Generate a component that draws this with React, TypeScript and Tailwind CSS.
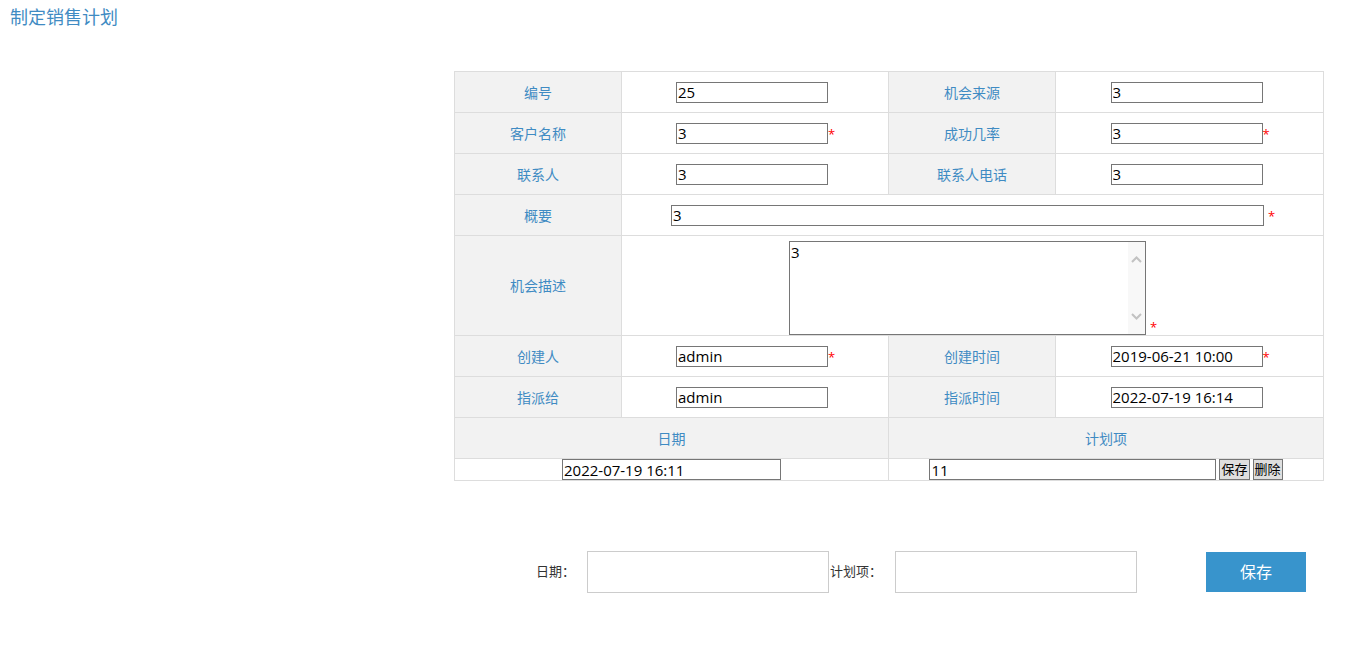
import React from 'react';

const labelCls = 'bg-[#f2f2f2] border border-[#dddddd] text-center text-[14px] text-[#3f8bc3] h-[41px]';
const valueCls = 'border border-[#dddddd] h-[41px]';
const inputCls =
  'h-[21px] border border-[#767676] bg-white px-[1px] text-[15px] leading-[19px] text-black outline-none';

const Star = ({ show }: { show?: boolean }) => (
  <span className="inline-block w-[6px] text-[13px] leading-none text-[#ff0000] self-start pt-[5px]">
    {show ? '*' : ''}
  </span>
);

const Field = ({ value, star }: { value: string; star?: boolean }) => (
  <div className="flex justify-center">
    <input className={`${inputCls} w-[152px]`} defaultValue={value} />
    <Star show={star} />
  </div>
);

const App = () => {
  return (
    <div className="min-h-[645px] bg-white" style={{ fontFamily: '"Open Sans", "Noto Sans CJK SC", sans-serif' }}>
      <div className="px-[10px] pt-[4px] text-[18px] leading-[27px] text-[#3f8bc3]">制定销售计划</div>

      <table className="ml-[454px] mt-[40px] w-[869px] border-collapse table-fixed">
        <colgroup>
          <col className="w-[167px]" />
          <col className="w-[267px]" />
          <col className="w-[167px]" />
          <col className="w-[268px]" />
        </colgroup>
        <tbody>
          <tr>
            <td className={labelCls}>编号</td>
            <td className={valueCls}><Field value="25" /></td>
            <td className={labelCls}>机会来源</td>
            <td className={valueCls}><Field value="3" /></td>
          </tr>
          <tr>
            <td className={labelCls}>客户名称</td>
            <td className={valueCls}><Field value="3" star /></td>
            <td className={labelCls}>成功几率</td>
            <td className={valueCls}><Field value="3" star /></td>
          </tr>
          <tr>
            <td className={labelCls}>联系人</td>
            <td className={valueCls}><Field value="3" /></td>
            <td className={labelCls}>联系人电话</td>
            <td className={valueCls}><Field value="3" /></td>
          </tr>
          <tr>
            <td className={labelCls}>概要</td>
            <td className={valueCls} colSpan={3}>
              <div className="flex justify-center gap-[4px]">
                <input className={`${inputCls} w-[593px]`} defaultValue="3" />
                <Star show />
              </div>
            </td>
          </tr>
          <tr>
            <td className={`${labelCls} h-[99px]`}>机会描述</td>
            <td className="border border-[#dddddd] h-[99px] align-top pt-[5px]" colSpan={3}>
              <div className="flex justify-center items-end gap-[4px]">
                <div className="relative h-[94px] w-[357px] border border-[#767676] bg-white">
                  <textarea
                    className="block h-full w-full resize-none overflow-hidden px-[1px] pr-[18px] text-[15px] leading-[20px] text-black outline-none"
                    defaultValue="3"
                  />
                  <div className="absolute right-0 top-0 bottom-0 w-[17px] bg-[#f8f8f8] flex flex-col items-center justify-between py-[14px]">
                    <svg width="11" height="7" viewBox="0 0 11 7" fill="none">
                      <path d="M1 6 L5.5 1.5 L10 6" stroke="#c2c2c2" strokeWidth="2" />
                    </svg>
                    <svg width="11" height="7" viewBox="0 0 11 7" fill="none">
                      <path d="M1 1 L5.5 5.5 L10 1" stroke="#c2c2c2" strokeWidth="2" />
                    </svg>
                  </div>
                </div>
                <span className="w-[6px] text-[13px] leading-[14px] text-[#ff0000] pb-[1px]">*</span>
              </div>
            </td>
          </tr>
          <tr>
            <td className={labelCls}>创建人</td>
            <td className={valueCls}><Field value="admin" star /></td>
            <td className={labelCls}>创建时间</td>
            <td className={valueCls}><Field value="2019-06-21 10:00" star /></td>
          </tr>
          <tr>
            <td className={labelCls}>指派给</td>
            <td className={valueCls}><Field value="admin" /></td>
            <td className={labelCls}>指派时间</td>
            <td className={valueCls}><Field value="2022-07-19 16:14" /></td>
          </tr>
          <tr>
            <td className={labelCls} colSpan={2}>日期</td>
            <td className={labelCls} colSpan={2}>计划项</td>
          </tr>
          <tr>
            <td className="border border-[#dddddd] h-[22px] p-0" colSpan={2}>
              <div className="flex justify-center">
                <input className={`${inputCls} w-[219px]`} defaultValue="2022-07-19 16:11" />
              </div>
            </td>
            <td className="border border-[#dddddd] h-[22px] p-0" colSpan={2}>
              <div className="flex justify-center gap-[3px]">
                <input className={`${inputCls} w-[287px]`} defaultValue="11" />
                <button className="h-[21px] border border-[#767676] bg-[#dfdfdf] px-[1px] text-[13px] leading-[19px] text-black">
                  保存
                </button>
                <button className="h-[21px] border border-[#767676] bg-[#dfdfdf] px-[1px] text-[13px] leading-[19px] text-black">
                  删除
                </button>
              </div>
            </td>
          </tr>
        </tbody>
      </table>

      <div className="mt-[70px] ml-[536px] flex items-center text-[13px] text-[#333]">
        <span className="w-[51px]">日期：</span>
        <input className="h-[42px] w-[242px] border border-[#cccccc] bg-white outline-none" />
        <span className="ml-[1px] w-[65px]">计划项：</span>
        <input className="h-[42px] w-[242px] border border-[#cccccc] bg-white outline-none" />
        <button className="ml-[69px] h-[40px] w-[100px] bg-[#3894cc] text-[16px] text-white">保存</button>
      </div>
    </div>
  );
};

export default App;
